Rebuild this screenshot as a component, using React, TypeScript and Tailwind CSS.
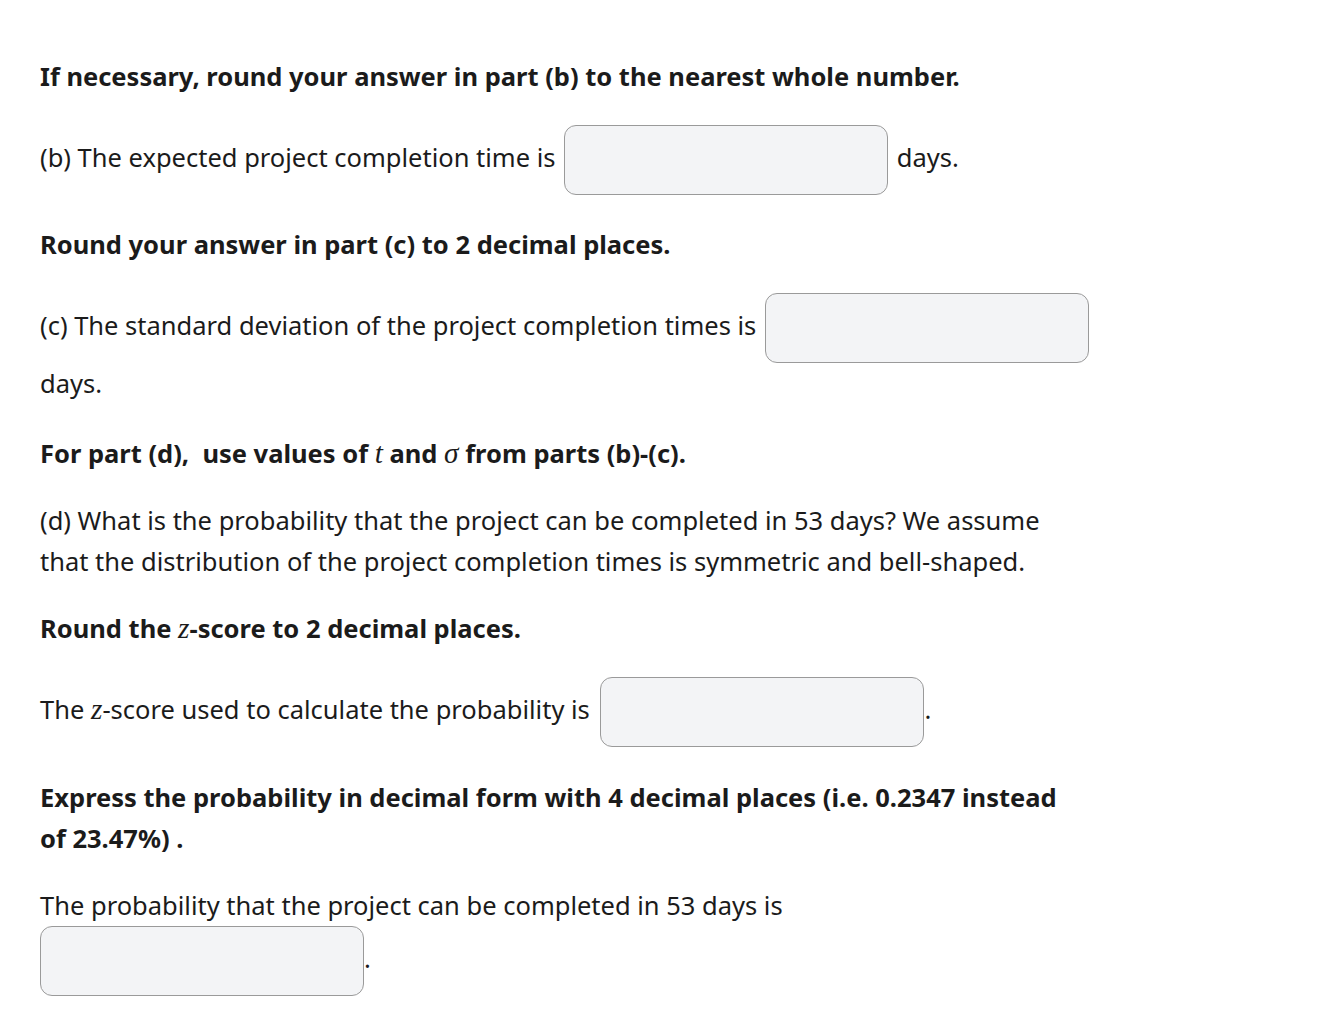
import React from 'react';

const Box: React.FC<{ className?: string }> = ({ className = 'ml-[2px] mr-[2px]' }) => (
  <span
    className={`inline-block align-middle w-[324px] h-[70px] rounded-[12px] border border-[#9a9a9a] bg-[#f3f4f6] ${className}`}
  />
);

const M: React.FC<{ children: React.ReactNode }> = ({ children }) => (
  <span
    className="italic font-normal text-[1.15em] leading-none"
    style={{ fontFamily: '"Liberation Serif", "DejaVu Serif", serif' }}
  >
    {children}
  </span>
);

export default function App() {
  return (
    <div className="min-h-screen bg-white">
      <div
        className="w-[1092px] pl-[40px] pt-[56px] text-[25.5px] leading-[41px] text-[#1b1b1b]"
        style={{ fontFamily: '"Noto Sans", sans-serif' }}
      >
        <p className="font-bold">If necessary, round your answer in part (b) to the nearest whole number.</p>

        <p className="mt-[28px]">
          (b) The expected project completion time is <Box /> days.
        </p>

        <p className="mt-[29px] font-bold">Round your answer in part (c) to 2 decimal places.</p>

        <p className="mt-[28px]">
          (c) The standard deviation of the project completion times is <Box /> days.
        </p>

        <p className="mt-[29px] font-bold">
          For part (d),&nbsp; use values of <M>t</M> and <M>σ</M> from parts (b)-(c).
        </p>

        <p className="mt-[26px]">
          (d) What is the probability that the project can be completed in 53 days? We assume that the
          distribution of the project completion times is symmetric and bell-shaped.
        </p>

        <p className="mt-[26px] font-bold">
          Round the <M>z</M>-score to 2 decimal places.
        </p>

        <p className="mt-[28px]">
          The <M>z</M>-score used to calculate the probability is <Box className="ml-[4px]" />.
        </p>

        <p className="mt-[30px] font-bold max-w-[1040px]">
          Express the probability in decimal form with 4 decimal places (i.e. 0.2347 instead of 23.47%) .
        </p>

        <p className="mt-[26px]">
          The probability that the project can be completed in 53 days is <Box className="ml-0" />.
        </p>
      </div>
    </div>
  );
}
